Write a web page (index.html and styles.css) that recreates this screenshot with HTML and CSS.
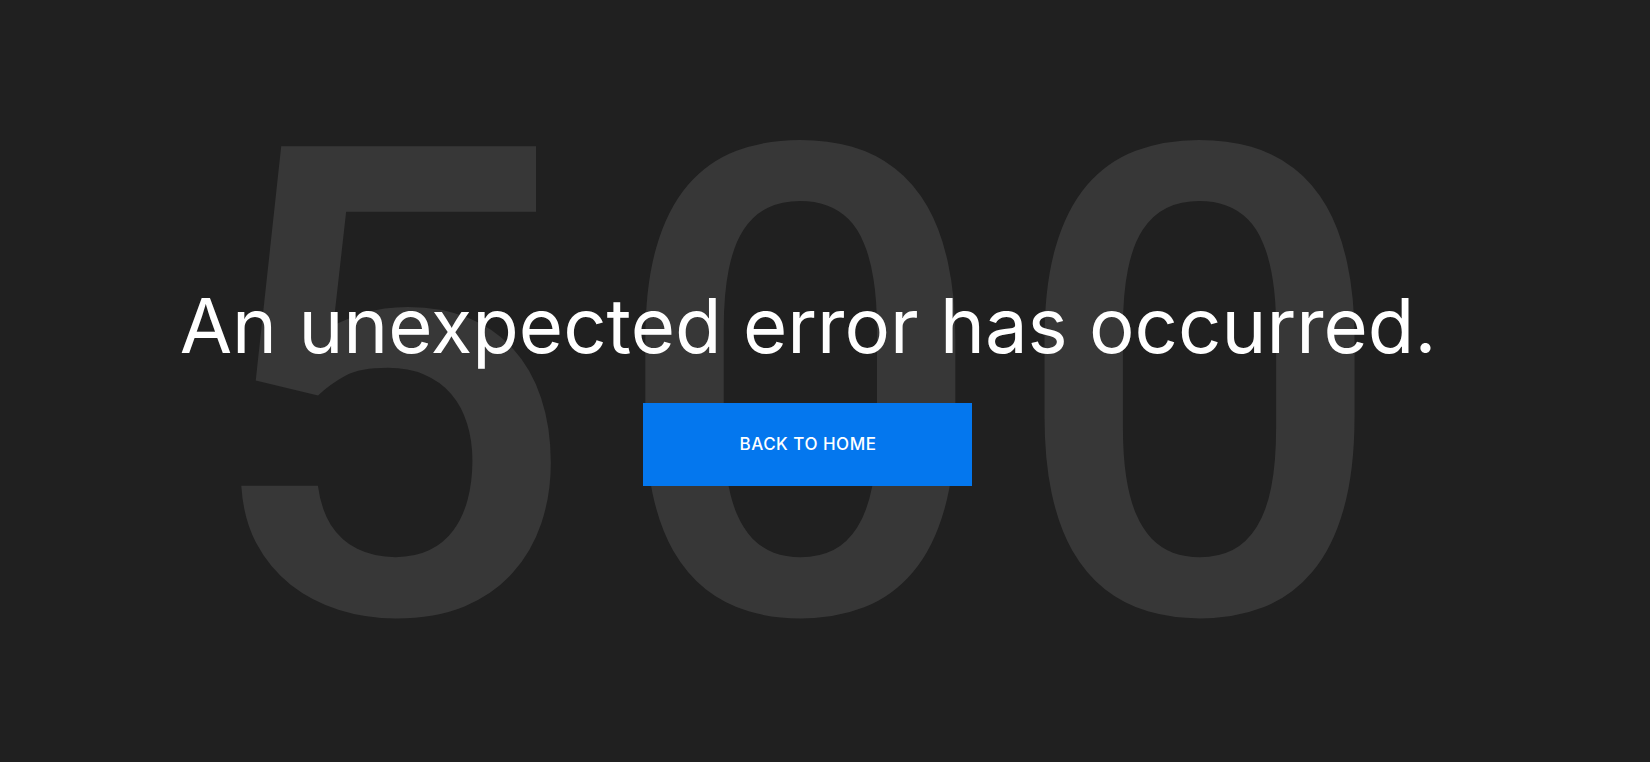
FILE: index.html
```html
<!DOCTYPE html>
<html lang="en">
<head>
<meta charset="utf-8">
<title>500</title>
<link rel="stylesheet" href="styles.css">
</head>
<body>
<main class="page">
  <div class="stack">
    <div class="code" aria-hidden="true"><span class="code-first">5</span>00</div>
    <div class="content">
      <h1 class="title">An unexpected error has occurred.</h1>
      <a class="btn" href="#">Back to home</a>
    </div>
  </div>
</main>
</body>
</html>
```
FILE: styles.css
```css
html, body {
  margin: 0;
  padding: 0;
  height: 100%;
  background: #202020;
}
body {
  font-family: Inter, "Liberation Sans", sans-serif;
  color: #fff;
  overflow: hidden;
}
.page {
  height: 100vh;
  display: flex;
  align-items: center;
  justify-content: center;
  padding-right: 38px;
  box-sizing: border-box;
}
.stack {
  display: grid;
  place-items: center;
}
.code,
.content {
  grid-area: 1 / 1;
}
.code {
  margin-top: 15px;
  margin-right: 2px;
  font-family: Roboto, sans-serif;
  font-weight: 500;
  font-size: 655px;
  line-height: 1;
  letter-spacing: 21px;
  color: #373737;
  transform: scaleX(1.015);
  user-select: none;
}
.code-first {
  letter-spacing: 33px;
}
.content {
  display: flex;
  flex-direction: column;
  align-items: center;
  position: relative;
  margin-top: 4px;
  margin-left: 4px;
}
.title {
  margin: 0;
  font-size: 76px;
  font-weight: 400;
  line-height: 1.2;
  letter-spacing: 0;
}
.btn {
  margin-top: 31px;
  width: 329px;
  height: 83px;
  display: flex;
  align-items: center;
  justify-content: center;
  background: #0477ee;
  color: #fff;
  text-decoration: none;
  text-transform: uppercase;
  font-size: 17px;
  font-weight: 500;
  letter-spacing: 0.5px;
}
```
